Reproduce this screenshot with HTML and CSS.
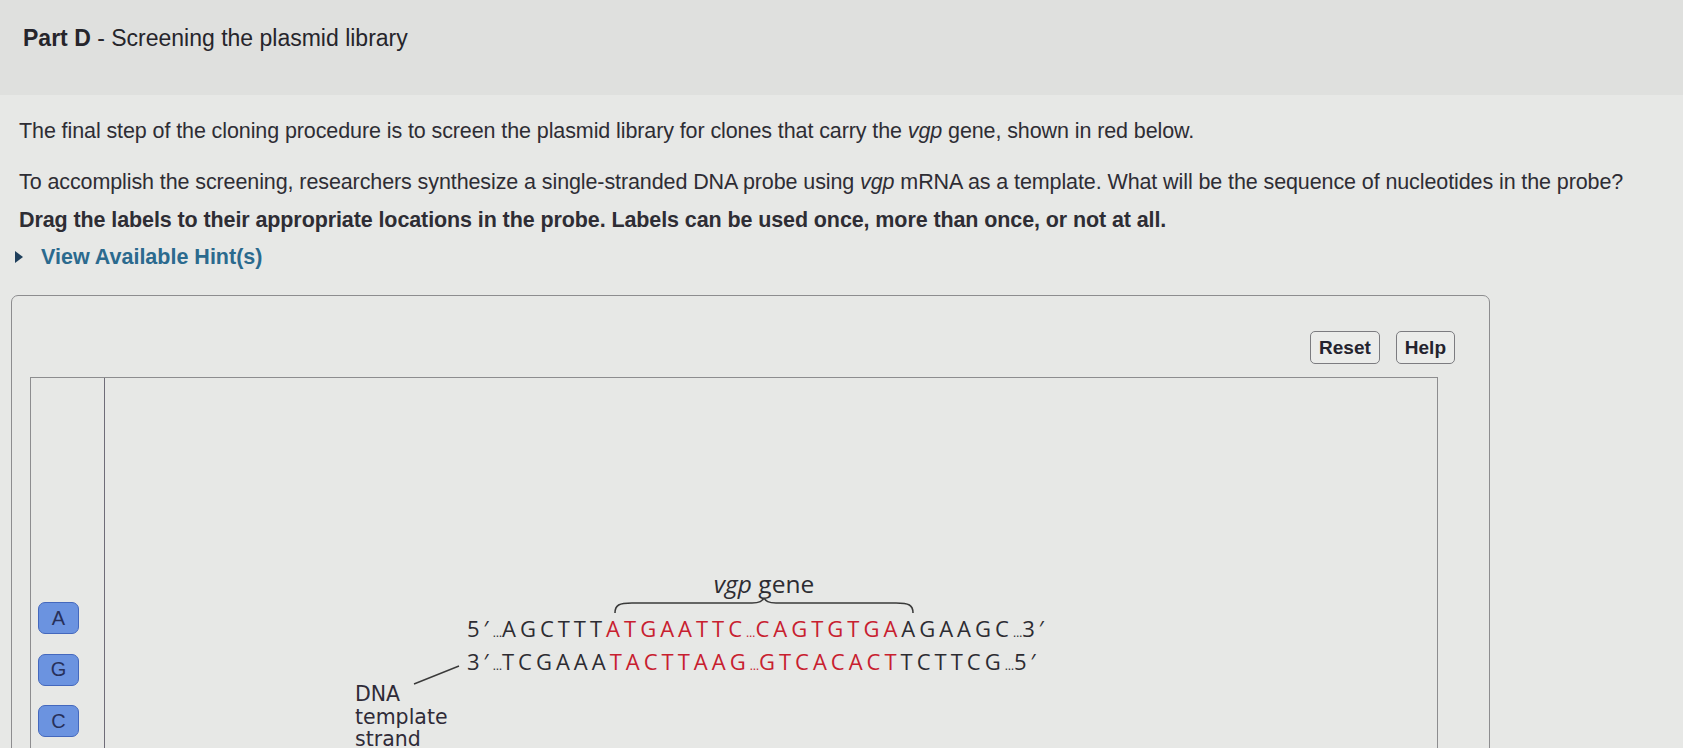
FILE: index.html
```html
<!DOCTYPE html>
<html>
<head>
<meta charset="utf-8">
<link rel="stylesheet" href="styles.css">
</head>
<body>
<div class="header">
  <h1 class="title"><b>Part D</b> - Screening the plasmid library</h1>
</div>
<div class="content">
  <p class="para p1">The final step of the cloning procedure is to screen the plasmid library for clones that carry the <i>vgp</i> gene, shown in red below.</p>
  <p class="para p2">To accomplish the screening, researchers synthesize a single-stranded DNA probe using <i>vgp</i> mRNA as a template. What will be the sequence of nucleotides in the probe?</p>
  <p class="para bold">Drag the labels to their appropriate locations in the probe. Labels can be used once, more than once, or not at all.</p>
  <div class="hint">
    <svg class="hint-tri" width="10" height="12" viewBox="0 0 10 12"><path d="M1 0 L9 6 L1 12 Z" fill="#1f3f5c"/></svg>
    <span>View Available Hint(s)</span>
  </div>
</div>
<div class="outer">
  <div class="toolbar">
    <button class="btn">Reset</button>
    <button class="btn">Help</button>
  </div>
  <div class="inner">
    <div class="labels">
      <div class="label">A</div>
      <div class="label">G</div>
      <div class="label">C</div>
    </div>
    <div class="stage">
      <div class="figure">
        <div class="gene-label"><i>vgp</i> gene</div>
        <svg class="brace" width="300" height="16" viewBox="0 0 300 16">
          <path d="M1 15 C1 7 5 5 18 5 L138 5 C146 5 148 3 150 0 C152 3 154 5 162 5 L282 5 C295 5 299 7 299 15" fill="none" stroke="#3a3a3a" stroke-width="1.6"/>
        </svg>
        <div class="seq">5′<span class="dots">…</span>AGCTTT<span class="red">ATGAATTC<span class="dots">…</span>CAGTGTGA</span>AGAAGC<span class="dots">…</span>3′</div>
        <div class="seq">3′<span class="dots">…</span>TCGAAA<span class="red">TACTTAAG<span class="dots">…</span>GTCACACT</span>TCTTCG<span class="dots">…</span>5′</div>
        <svg class="leader" width="50" height="22" viewBox="0 0 50 22"><path d="M2 20 L47 2" stroke="#3a3a3a" stroke-width="1.4"/></svg>
        <div class="strand-label">
          <div>DNA</div>
          <div>template</div>
          <div>strand</div>
        </div>
      </div>
    </div>
  </div>
</div>
</body>
</html>
```
FILE: styles.css
```css
html, body {
  margin: 0;
  padding: 0;
}
body {
  background: #e7e8e6;
  color: #2e2d34;
  font-family: "Liberation Sans", Arial, sans-serif;
  width: 1683px;
  height: 748px;
  overflow: hidden;
}
.header {
  background: #dfe0de;
  height: 95px;
  padding: 25px 0 0 23px;
  box-sizing: border-box;
}
.title {
  margin: 0;
  font-size: 23px;
  font-weight: normal;
  color: #26252b;
}
.title b {
  font-weight: bold;
}
.content {
  padding: 23px 0 0 19px;
}
.para {
  margin: 0;
  font-size: 21.5px;
  line-height: 26px;
  letter-spacing: -0.1px;
}
.para.p1 {
  margin-bottom: 25px;
}
.para.p2 {
  margin-bottom: 12px;
}
.para.bold {
  font-weight: bold;
  margin-bottom: 12px;
}
.hint {
  display: flex;
  align-items: center;
  gap: 17px;
  margin-left: -5px;
  color: #2b6a8e;
  font-weight: bold;
  font-size: 21.5px;
  line-height: 24px;
}
.outer {
  margin: 26px 0 0 11px;
  width: 1479px;
  height: 500px;
  border: 1.5px solid #8d8d8f;
  border-radius: 7px;
  box-sizing: border-box;
}
.toolbar {
  display: flex;
  justify-content: flex-end;
  gap: 16px;
  padding: 35px 34px 0 0;
}
.btn {
  font-family: "Liberation Sans", Arial, sans-serif;
  font-size: 19px;
  font-weight: bold;
  color: #24232e;
  background: #ebecea;
  border: 1.5px solid #7c7c80;
  border-radius: 5px;
  padding: 3px 8px;
  height: 33px;
}
.inner {
  margin: 13px 0 0 18px;
  width: 1406px;
  height: 400px;
  border: 1px solid #8d8d8f;
  display: grid;
  grid-template-columns: 74px 1fr;
}
.labels {
  border-right: 1.5px solid #6f6c78;
  display: flex;
  flex-direction: column;
  align-items: flex-start;
  gap: 19.5px;
  padding: 224px 0 0 7px;
}
.label {
  width: 41px;
  height: 32px;
  box-sizing: border-box;
  background: #6b93e0;
  border: 1.5px solid #4468bd;
  border-radius: 7px;
  display: flex;
  align-items: center;
  justify-content: center;
  font-size: 20px;
  color: #27305a;
}
.stage {
  position: relative;
}
.figure {
  position: relative;
  margin: 192px 0 0 362px;
  width: 680px;
}
.gene-label {
  margin-left: 147px;
  width: 300px;
  text-align: center;
  font-family: "Open Sans", "DejaVu Sans", sans-serif;
  font-size: 24.5px;
  line-height: 28px;
  color: #2d2c32;
}
.brace {
  display: block;
  margin: 0 0 0 147px;
}
.seq {
  font-family: "Open Sans", "DejaVu Sans", sans-serif;
  font-size: 22px;
  line-height: 29px;
  letter-spacing: 4px;
  color: #2d2c32;
  white-space: nowrap;
}
.seq .red {
  color: #c8202f;
}
.dots {
  font-size: 12px;
  letter-spacing: 0;
}
.leader {
  position: absolute;
  left: -55px;
  top: 94px;
}
.strand-label {
  position: absolute;
  left: -112px;
  top: 113px;
  font-family: "DejaVu Sans", Verdana, sans-serif;
  font-size: 20.5px;
  line-height: 22.5px;
  color: #2f2b38;
}
```
